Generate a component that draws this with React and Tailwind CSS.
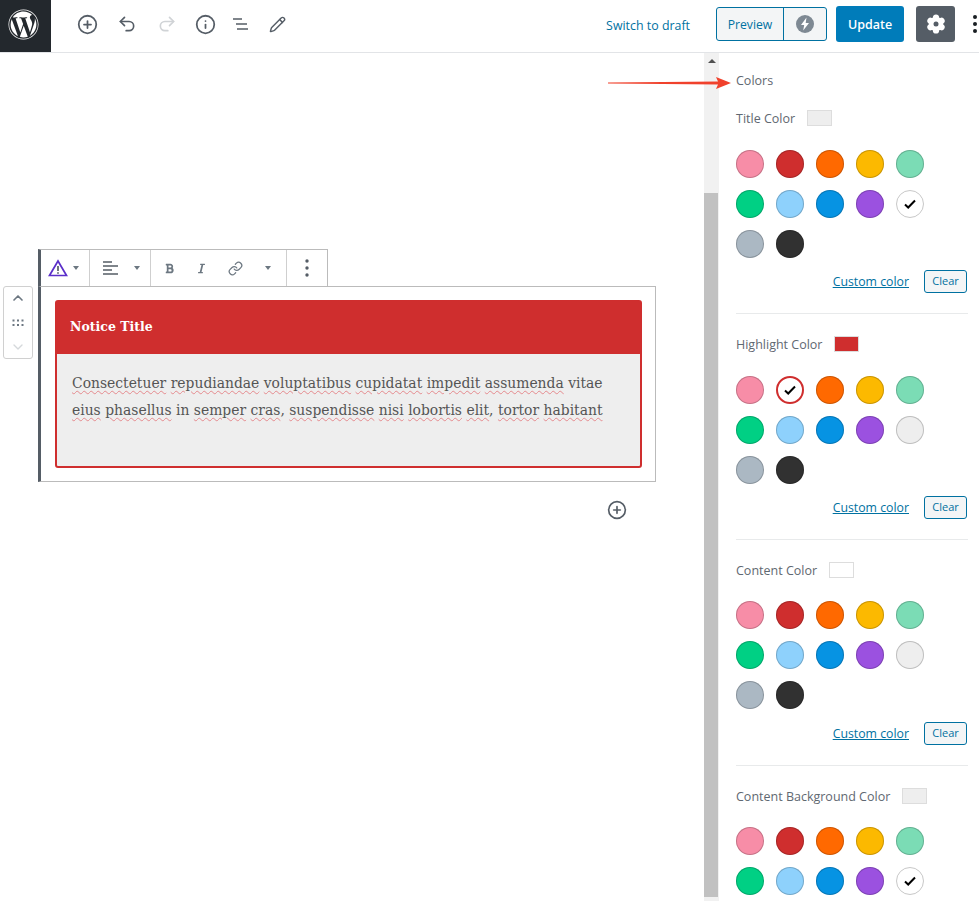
import React from 'react';
import { CirclePlus, Undo2, Redo2, Info, Pencil, ChevronUp, ChevronDown, Link, Settings } from 'lucide-react';
import { FaWordpress, FaBold, FaItalic } from 'react-icons/fa';

const UI_FONT = "font-['Open_Sans','Noto_Sans',sans-serif]";

const PALETTE = ['#f78da7', '#cf2e2e', '#ff6900', '#fcb900', '#7bdcb5', '#00d084', '#8ed1fc', '#0693e3', '#9b51e0', '#eeeeee', '#abb8c3', '#313131'];

const SECTIONS = [
  { title: 'Title Color', swatch: '#eeeeee', selected: 9 },
  { title: 'Highlight Color', swatch: '#cf2e2e', selected: 1 },
  { title: 'Content Color', swatch: '#ffffff', selected: -1, tight: true },
  { title: 'Content Background Color', swatch: '#eeeeee', selected: 9, tight: true },
];

const LINE_ONE = ['Consectetuer', 'repudiandae', 'voluptatibus', 'cupidatat', 'impedit', 'assumenda'];

function Squiggle({ children }) {
  return <span className="underline decoration-wavy decoration-[#e58a8e] decoration-1 underline-offset-[2px]">{children}</span>;
}

function CheckMark() {
  return (
    <svg width="14" height="14" viewBox="0 0 14 14" fill="none" stroke="#000" strokeWidth="2">
      <path d="M2 7.5l3.2 3L12 3.5" />
    </svg>
  );
}

function ColorDot({ color, index, selected }) {
  if (index === selected) {
    const ringed = color !== '#eeeeee';
    return (
      <div className={`w-7 h-7 rounded-full bg-white flex items-center justify-center ${ringed ? 'border-2 border-[#cf2e2e]' : 'border border-[#c8c8c8]'}`}>
        <CheckMark />
      </div>
    );
  }
  return <div className="w-7 h-7 rounded-full shadow-[inset_0_0_0_1px_rgba(0,0,0,0.2)]" style={{ backgroundColor: color }} />;
}

function ColorSection({ title, swatch, selected, tight, last }) {
  return (
    <div>
      <div className="flex items-center gap-3 h-5">
        <span className="text-[12.5px] pt-[2px] text-[#5f6871]">{title}</span>
        <span className="w-[25px] h-4 border border-[#dddddd]" style={{ backgroundColor: swatch }} />
      </div>
      <div className={`grid grid-cols-[repeat(5,28px)] gap-3 ${tight ? 'mt-[21px]' : 'mt-[22px]'}`}>
        {PALETTE.map((color, i) => (
          <ColorDot key={color} color={color} index={i} selected={selected} />
        ))}
      </div>
      {!last && (
        <>
          <div className={`flex items-center justify-end gap-[15px] mr-px h-[23px] ${tight ? 'mt-[13px]' : 'mt-3'}`}>
            <span className="text-[12.3px] pt-[1px] text-[#0071a1] underline">Custom color</span>
            <span className="w-[43px] h-[23px] rounded-[3px] border border-[#0071a1] bg-[#f3f5f6] text-[11px] text-[#0071a1] flex items-center justify-center">Clear</span>
          </div>
          <div className="h-px bg-[#e8eaeb] mt-5 mb-5" />
        </>
      )}
    </div>
  );
}

export default function App() {
  return (
    <div className={`w-[979px] h-[901px] overflow-hidden bg-white flex flex-col relative ${UI_FONT}`}>
      {/* Top bar */}
      <header className="h-[53px] shrink-0 flex items-start border-b border-[#e2e4e7]">
        <div className="w-[51px] h-[52px] bg-[#23282d] flex items-center justify-center text-white pb-1 pr-[5px]">
          <FaWordpress size={31} />
        </div>
        <div className="h-12 flex items-center pl-4 text-[#555d66]">
          <div className="w-10 flex justify-center"><CirclePlus size={21} strokeWidth={2} /></div>
          <div className="w-10 flex justify-center"><Undo2 size={20} strokeWidth={2} /></div>
          <div className="w-10 flex justify-center text-[#d0d3d6]"><Redo2 size={20} strokeWidth={2} /></div>
          <div className="w-9 flex justify-center"><Info size={21} strokeWidth={2} /></div>
          <div className="w-9 flex justify-center">
            <svg width="18" height="14" viewBox="0 0 18 14" fill="none" stroke="currentColor" strokeWidth="1.6">
              <path d="M1 2h9M4 7h11M5 12h11" />
            </svg>
          </div>
          <div className="w-9 flex justify-center"><Pencil size={17} strokeWidth={2} /></div>
        </div>
        <div className="h-12 ml-auto flex items-center">
          <span className="text-[12.4px] pt-1 text-[#0071a1] mr-[26px]">Switch to draft</span>
          <div className="flex h-[34px] w-[111px] rounded-[3px] border border-[#0071a1] bg-[#f3f5f6]">
            <span className="w-[67px] border-r border-[#0071a1] pt-[3px] text-[12.2px] text-[#0071a1] flex items-center justify-center">Preview</span>
            <span className="flex-1 flex items-center justify-center">
              <svg width="20" height="20" viewBox="0 0 20 20">
                <circle cx="10" cy="10" r="9" fill="#7e8993" />
                <path d="M11.5 3.5L6 11h3.2l-1 5.5L14 9h-3.3z" fill="#fff" />
              </svg>
            </span>
          </div>
          <span className="ml-[9px] w-[68px] h-9 rounded-[3px] bg-[#007cba] text-white pt-[3px] text-[12.5px] font-semibold flex items-center justify-center">Update</span>
          <span className="ml-3 w-[39px] h-9 rounded-[3px] bg-[#555d66] text-white flex items-center justify-center">
            <Settings size={20} strokeWidth={3} fill="#fff" stroke="#fff" className="[&_circle]:fill-[#555d66] [&_circle]:stroke-none" />
          </span>
          <svg className="ml-[18px] mr-[2px]" width="4" height="18" viewBox="0 0 4 18" fill="#191e23">
            <circle cx="2" cy="2" r="2" />
            <circle cx="2" cy="9" r="2" />
            <circle cx="2" cy="16" r="2" />
          </svg>
        </div>
      </header>

      <div className="flex-1 flex min-h-0">
        {/* Editor canvas */}
        <main className="w-[704px] shrink-0 relative pl-[38px] pt-[196px]">
          <div className="w-[290px] h-[38px] flex border border-l-[3px] border-[#bbbbbb] border-l-[#555d66] text-[#6c7781]">
            <div className="w-[49px] border-r border-[#cfcfcf] flex items-center pl-[7px] gap-[5px]">
              <svg width="20" height="18" viewBox="0 0 20 18" fill="none" stroke="#5b2fc9" strokeWidth="1.7">
                <path d="M10 2L1.5 16.5h17z" />
                <path d="M10 7v5M10 13.2v1.6" stroke="#555d66" />
              </svg>
              <span className="w-0 h-0 border-x-[3.5px] border-x-transparent border-t-[4px] border-t-[#6c7781]" />
            </div>
            <div className="w-[61px] border-r border-[#cfcfcf] flex items-center pl-3">
              <svg width="16" height="14" viewBox="0 0 16 14" fill="none" stroke="#555d66" strokeWidth="1.5">
                <path d="M1 1h9M1 5h15M1 9h9M1 13h15" />
              </svg>
              <span className="ml-[16px] w-0 h-0 border-x-[3.5px] border-x-transparent border-t-[4px] border-t-[#6c7781]" />
            </div>
            <div className="w-[136px] border-r border-[#cfcfcf] flex items-center pl-[13px]">
              <FaBold size={11} />
              <FaItalic size={11} className="ml-[21px]" />
              <Link size={15} strokeWidth={2} className="ml-[21px]" />
              <span className="ml-[22px] w-0 h-0 border-x-[3.5px] border-x-transparent border-t-[4px] border-t-[#6c7781]" />
            </div>
            <div className="w-10 flex items-center justify-center">
              <svg width="4" height="18" viewBox="0 0 4 18" fill="#555d66">
                <circle cx="2" cy="2" r="1.7" />
                <circle cx="2" cy="9" r="1.7" />
                <circle cx="2" cy="16" r="1.7" />
              </svg>
            </div>
          </div>

          {/* Block */}
          <div className="w-[618px] -mt-px border border-l-[3px] border-[#bbbbbb] border-l-[#555d66] pt-[13px] pb-[13px] pl-[14px] pr-[13px] font-['DejaVu_Serif','Liberation_Serif',serif]">
            <div className="h-[168px] rounded-[3px] border-2 border-[#cf2e2e] bg-[#eeeeee] flex flex-col">
              <div className="h-[53px] shrink-0 -mt-px bg-[#cf2e2e] text-white text-[12.5px] font-bold flex items-center pl-[13px]">Notice Title</div>
              <div className="pl-[15px] pt-4 text-[13.9px] leading-[27px] text-[#555555] whitespace-nowrap">
                <div>
                  {LINE_ONE.map((word) => (
                    <span key={word}><Squiggle>{word}</Squiggle>{' '}</span>
                  ))}
                  vitae
                </div>
                <div>
                  <Squiggle>eius</Squiggle> <Squiggle>phasellus</Squiggle> in <Squiggle>semper</Squiggle> <Squiggle>cras</Squiggle>, <Squiggle>suspendisse</Squiggle> <Squiggle>nisi</Squiggle> <Squiggle>lobortis</Squiggle> <Squiggle>elit</Squiggle>, <Squiggle>tortor</Squiggle> <Squiggle>habitant</Squiggle>
                </div>
              </div>
            </div>
          </div>

          <div className="ml-[569px] mt-[18px] text-[#555d66]">
            <CirclePlus size={20} strokeWidth={2} />
          </div>

          {/* Block mover */}
          <div className="absolute left-[3px] top-[233px] w-[30px] h-[73px] rounded-[3px] border border-[#d0d0d0] bg-white flex flex-col items-center justify-between py-[3px]">
            <ChevronUp size={16} strokeWidth={2.5} className="text-[#6c7781]" />
            <svg width="12" height="8" viewBox="0 0 12 8" fill="#6c7781">
              <rect x="0.5" y="0.5" width="2" height="2" />
              <rect x="5" y="0.5" width="2" height="2" />
              <rect x="9.5" y="0.5" width="2" height="2" />
              <rect x="0.5" y="5" width="2" height="2" />
              <rect x="5" y="5" width="2" height="2" />
              <rect x="9.5" y="5" width="2" height="2" />
            </svg>
            <ChevronDown size={16} strokeWidth={2} className="text-[#d5d8db]" />
          </div>
        </main>

        {/* Scrollbar */}
        <div className="w-[15px] shrink-0 bg-[#f1f1f1] flex flex-col items-center">
          <span className="mt-[6px] w-0 h-0 border-x-[4px] border-x-transparent border-b-[4px] border-b-[#505050]" />
          <div className="mt-[130px] w-[14px] h-[704px] self-start bg-[#c1c1c1]" />
        </div>

        {/* Sidebar */}
        <aside className="flex-1 min-w-0 pt-[18px] pl-[17px] pr-[11px] overflow-hidden">
          <div className="h-5 flex items-center text-[12.5px] text-[#5f6871] mb-[17px]">Colors</div>
          {SECTIONS.map((section, i) => (
            <ColorSection key={section.title} {...section} last={i === SECTIONS.length - 1} />
          ))}
        </aside>
      </div>

      {/* Annotation arrow */}
      <svg className="absolute left-[606px] top-[74px]" width="126" height="18" viewBox="0 0 126 18">
        <path d="M2 8.5L112 7.5L110 3L125 9L110 15L112 10.5L2 9.5z" fill="#f0412c" />
      </svg>
    </div>
  );
}
